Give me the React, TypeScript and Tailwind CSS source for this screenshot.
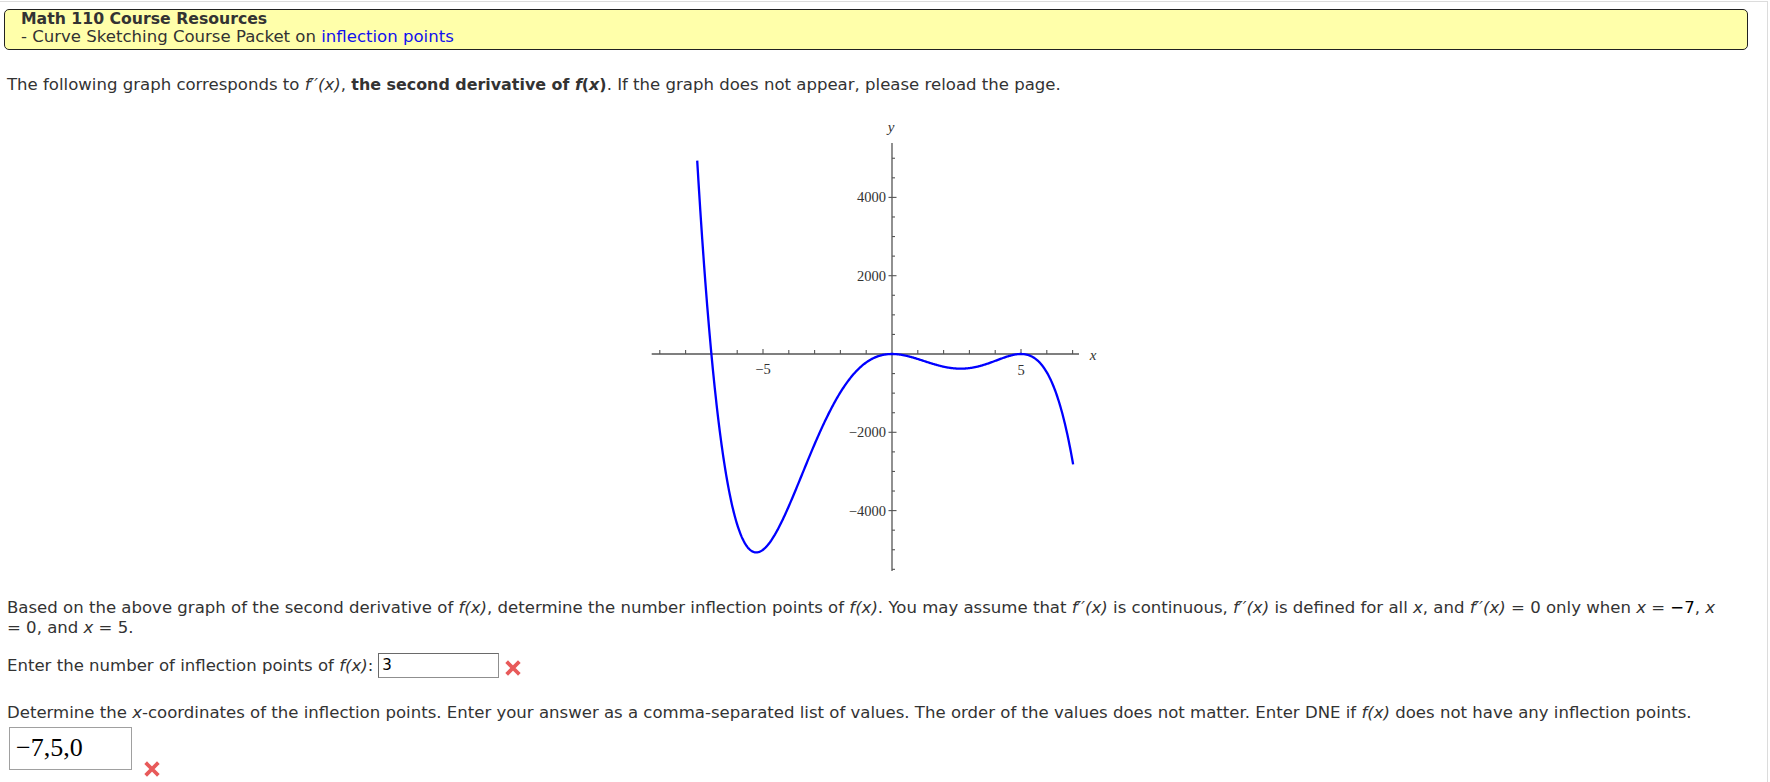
import React from "react";

const AX = 250; // local x of y-axis
const AY = 254; // local y of x-axis
const SX = 25.8; // px per x unit
const SY = 78.3 / 2000; // px per y unit

const px = (x: number) => AX + x * SX;
const py = (y: number) => AY - y * SY;
const f = (x: number) => -(x + 7) * x * x * (x - 5) * (x - 5);

function curvePath() {
  const pts: string[] = [];
  const x0 = -7.55;
  const x1 = 7.02;
  const n = 600;
  for (let i = 0; i <= n; i++) {
    const x = x0 + ((x1 - x0) * i) / n;
    pts.push(`${i === 0 ? "M" : "L"}${px(x).toFixed(2)},${py(f(x)).toFixed(2)}`);
  }
  return pts.join(" ");
}

function Graph() {
  const xt: number[] = [];
  for (let i = -9; i <= 7; i++) if (i !== 0) xt.push(i);
  const yt: number[] = [];
  for (let v = -5500; v <= 5000; v += 500) if (v !== 0) yt.push(v);
  return (
    <svg width="500" height="490" viewBox="0 0 500 490" className="block">
      <line x1="9.7" y1={AY} x2="437" y2={AY} stroke="#555" strokeWidth="1.3" />
      {xt.map((i) => (
        <line
          key={"xt" + i}
          x1={px(i)}
          x2={px(i)}
          y1={AY}
          y2={AY - (Math.abs(i) === 5 ? 5 : 4)}
          stroke="#555"
          strokeWidth="1.1"
        />
      ))}
      <line x1={AX} y1="43" x2={AX} y2="471" stroke="#555" strokeWidth="1.3" />
      {yt.map((v) => {
        const major = v % 2000 === 0;
        return (
          <line
            key={"yt" + v}
            x1={major ? AX - 3.5 : AX}
            x2={major ? AX + 4.5 : AX + 3}
            y1={py(v)}
            y2={py(v)}
            stroke="#555"
            strokeWidth="1.1"
          />
        );
      })}
      <g fontFamily="'Liberation Serif', serif" fontSize="14.5" fill="#333">
        <text x={AX - 6} y={py(4000)} textAnchor="end" dominantBaseline="central">4000</text>
        <text x={AX - 6} y={py(2000)} textAnchor="end" dominantBaseline="central">2000</text>
        <text x={AX - 6} y={py(-2000)} textAnchor="end" dominantBaseline="central">−2000</text>
        <text x={AX - 6} y={py(-4000)} textAnchor="end" dominantBaseline="central">−4000</text>
        <text x={px(-5)} y={AY + 15} textAnchor="middle" dominantBaseline="central">−5</text>
        <text x={px(5)} y={AY + 16} textAnchor="middle" dominantBaseline="central">5</text>
        <text x={AX - 1} y="27" textAnchor="middle" dominantBaseline="central" fontStyle="italic" fontSize="15">y</text>
        <text x="451" y={AY + 1} textAnchor="middle" dominantBaseline="central" fontStyle="italic" fontSize="15">x</text>
      </g>
      <path d={curvePath()} fill="none" stroke="#0000ff" strokeWidth="2.3" strokeLinejoin="round" />
    </svg>
  );
}

function RedX() {
  return (
    <svg width="16" height="16" viewBox="0 0 16 16" className="block">
      <path d="M3 3 L13 13 M13 3 L3 13" stroke="#e85a5a" strokeWidth="3.8" strokeLinecap="square" />
    </svg>
  );
}

const Fpp = () => <span className="italic">f′′(x)</span>;
const Fx = () => <span className="italic">f(x)</span>;
const X = () => <span className="italic">x</span>;

export default function App() {
  return (
    <div className="w-[1770px] min-h-[782px] bg-white font-['DejaVu_Sans',sans-serif] text-[16.56px] text-[#333]">
      <div className="mt-px mr-[2px] border-t border-r border-[#dcdcdc] pb-6">
        <div className="ml-[4px] mr-[19px] mt-[7px] rounded-[5px] border border-[#222] bg-[#ffffaa] pl-[16px] pt-0 pb-[3px] leading-[18px]">
          <div className="font-bold text-[15.7px] text-[#333]">Math 110 Course Resources</div>
          <div>
            - Curve Sketching Course Packet on <span className="text-[#1212ee]">inflection points</span>
          </div>
        </div>

        <div className="pl-[7px] pr-[36px] leading-[19.5px]">
          <p className="mt-[25px] leading-[20px]">
            The following graph corresponds to <Fpp />, <b className="font-bold text-[15.9px]">the second derivative of <span className="italic">f</span>(<span className="italic">x</span>)</b>. If the graph does not appear, please reload the page.
          </p>

          <div className="ml-[635px] mt-[5px]">
            <Graph />
          </div>

          <p className="mt-[8px]">
            Based on the above graph of the second derivative of <Fx />, determine the number inflection points of <Fx />. You may assume that <Fpp /> is continuous, <Fpp /> is defined for all <X />, and <Fpp /> = 0 only when <X /> = <span className="text-black">−7</span>, <X /> = 0, and <X /> = 5.
          </p>

          <div className="mt-[16px] flex items-center">
            <span>Enter the number of inflection points of <Fx />:</span>
            <div className="ml-[5px] flex h-[25px] w-[121px] items-center border border-[#8f8f8f] border-t-[#6a6a6a] border-l-[#6a6a6a] pl-[3px] text-[15px] text-black">
              3
            </div>
            <div className="ml-[6px] mt-[4px]">
              <RedX />
            </div>
          </div>

          <p className="mt-[25px]">
            Determine the <X />-coordinates of the inflection points. Enter your answer as a comma-separated list of values. The order of the values does not matter. Enter DNE if <Fx /> does not have any inflection points.
          </p>

          <div className="mt-[4px] flex items-end">
            <div className="ml-[2px] flex h-[43px] w-[123px] items-center border border-[#a0a0a0] pl-[6px] font-['Liberation_Serif',serif] text-[26px] text-black">
              −7,5,0
            </div>
            <div className="ml-[12px] mb-[-7px]">
              <RedX />
            </div>
          </div>
        </div>
      </div>
    </div>
  );
}
